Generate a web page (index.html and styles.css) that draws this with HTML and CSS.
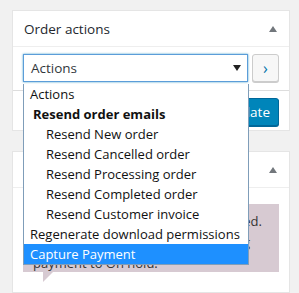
FILE: index.html
```html
<!DOCTYPE html>
<html lang="en">
<head>
  <meta charset="UTF-8" />
  <title>Order actions</title>
  <link rel="stylesheet" href="styles.css">
</head>
<body>

<div class="postbox">
  <div class="hndle">
    <h2>Order actions</h2>
    <span class="toggle"></span>
  </div>
  <div class="inside">
    <div class="action-row">
      <div class="select-box">
        <span>Actions</span>
        <span class="caret"></span>
      </div>
      <button class="go-btn">&rsaquo;</button>

      <ul class="dropdown">
        <li>Actions</li>
        <li class="group">Resend order emails</li>
        <li class="sub">Resend New order</li>
        <li class="sub">Resend Cancelled order</li>
        <li class="sub">Resend Processing order</li>
        <li class="sub">Resend Completed order</li>
        <li class="sub">Resend Customer invoice</li>
        <li>Regenerate download permissions</li>
        <li class="selected">Capture Payment</li>
      </ul>
    </div>
    <div class="footer-row">
      <a class="trash">Move to trash</a>
      <button class="update-btn">Update</button>
    </div>
  </div>
</div>

<div class="postbox">
  <div class="hndle">
    <h2>Order notes</h2>
    <span class="toggle"></span>
  </div>
  <div class="inside notes">
    <div class="note">
      <p>Awaiting BACS payment. Order saved.</p>
      <p>Order status changed from Pending</p>
      <p>payment to On hold.</p>
    </div>
  </div>
</div>

</body>
</html>
```

FILE: styles.css
```css
* {
  margin: 0; padding: 0; box-sizing: border-box;
  font-family: 'Open Sans', sans-serif;
}

body {
  background: #f1f1f1;
  color: #23282d;
  padding: 10px 9px 0 12px;
  overflow: hidden;
}

.postbox {
  background: #fff;
  border: 1px solid #e5e5e5;
  margin-bottom: 20px;
}

.hndle {
  height: 36px;
  border-bottom: 1px solid #eee;
  display: flex;
  align-items: center;
  justify-content: space-between;
  padding: 0 12px 0 11px;
}

.hndle h2 {
  font-size: 13.5px;
  font-weight: 400;
  color: #23282d;
}

.toggle {
  width: 0; height: 0;
  border-left: 4px solid transparent;
  border-right: 4px solid transparent;
  border-bottom: 6px solid #72777c;
}

.inside {
  padding: 7px 10px 4px 10px;
}

.action-row {
  position: relative;
  display: flex;
  gap: 4px;
}

.select-box {
  width: 225px;
  height: 28px;
  border: 1px solid #5b9dd9;
  box-shadow: 0 0 2px rgba(30, 140, 190, .8);
  display: flex;
  align-items: center;
  justify-content: space-between;
  padding: 0 6px 0 7px;
  font-size: 13.5px;
  color: #32373c;
}

.caret {
  width: 0; height: 0;
  border-left: 4px solid transparent;
  border-right: 4px solid transparent;
  border-top: 6px solid #222;
}

.go-btn {
  width: 27px;
  height: 28px;
  background: #f7f7f7;
  border: 1px solid #ccc;
  border-radius: 3px;
  box-shadow: 0 1px 0 #ccc;
  color: #0073aa;
  font-size: 16px;
  line-height: 24px;
}

.dropdown {
  position: absolute;
  top: 30px;
  left: 0;
  width: 226px;
  list-style: none;
  background: #fff;
  border: 1px solid #7f9db9;
  border-top: none;
  z-index: 2;
}

.dropdown li {
  height: 20px;
  line-height: 20px;
  font-size: 13px;
  padding-left: 6px;
  color: #111;
  white-space: nowrap;
}

.dropdown .group {
  font-weight: 700;
  padding-left: 9px;
}

.dropdown .sub {
  padding-left: 22px;
}

.dropdown .selected {
  background: #1e90ff;
  color: #fff;
}

.footer-row {
  margin: 8px -10px 0;
  border-top: 1px solid #ddd;
  padding: 7px 10px 0;
  display: flex;
  justify-content: space-between;
  align-items: center;
}

.trash {
  color: #a00;
  font-size: 13px;
  text-decoration: underline;
}

.update-btn {
  background: #0085ba;
  border: 1px solid #006799;
  border-radius: 3px;
  box-shadow: 0 1px 0 #006799;
  color: #fff;
  font-size: 13.5px;
  height: 28px;
  padding: 0 8px;
}

.notes {
  padding: 16px 10px 20px;
}

.note {
  position: relative;
  background: #d7cad2;
  padding: 7px 10px;
  height: 68px;
}

.note::after {
  content: '';
  position: absolute;
  left: 20px;
  bottom: -10px;
  border-top: 10px solid #d7cad2;
  border-right: 10px solid transparent;
}

.note p {
  font-size: 13px;
  line-height: 21px;
  color: #333;
  white-space: nowrap;
}
```
